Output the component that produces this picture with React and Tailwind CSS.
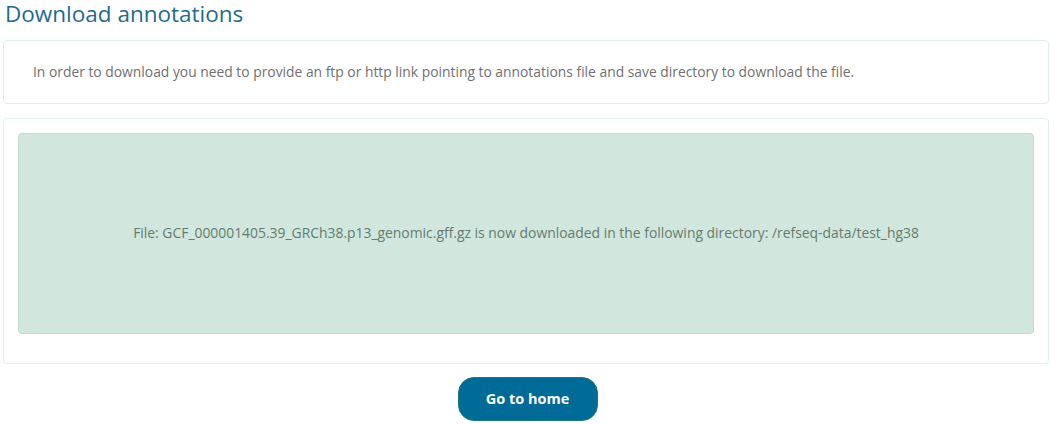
export default function App() {
  return (
    <div className="w-[1055px] h-[425px] bg-white px-[3px] font-['Open_Sans',sans-serif]">
      <h1 className="pl-[2px] text-[22.5px] leading-[27px] text-[#1f6b8e]">Download annotations</h1>
      <div className="mt-[13px] mr-[3px] h-[64px] rounded border border-[#e3eeee] flex items-center pl-[29px]">
        <p className="text-[13.85px] text-[#707070]">
          In order to download you need to provide an ftp or http link pointing to annotations file and save directory to download the file.
        </p>
      </div>
      <div className="mt-[14px] mr-[3px] rounded border border-[#e3eeee] pt-[14px] px-[14px] pb-[29px]">
        <div className="h-[201px] rounded-sm border border-[#bfdccd] bg-[#d1e7dd] flex items-center justify-center">
          <p className="text-[13.9px] text-[#657b6f]">
            File: GCF_000001405.39_GRCh38.p13_genomic.gff.gz is now downloaded in the following directory: /refseq-data/test_hg38
          </p>
        </div>
      </div>
      <div className="flex justify-center mt-[13px]">
        <button className="w-[140px] h-[44px] rounded-[16px] border border-[#1a7a7a] bg-[#006b96] text-white font-bold text-[14.5px]">
          Go to home
        </button>
      </div>
    </div>
  );
}
